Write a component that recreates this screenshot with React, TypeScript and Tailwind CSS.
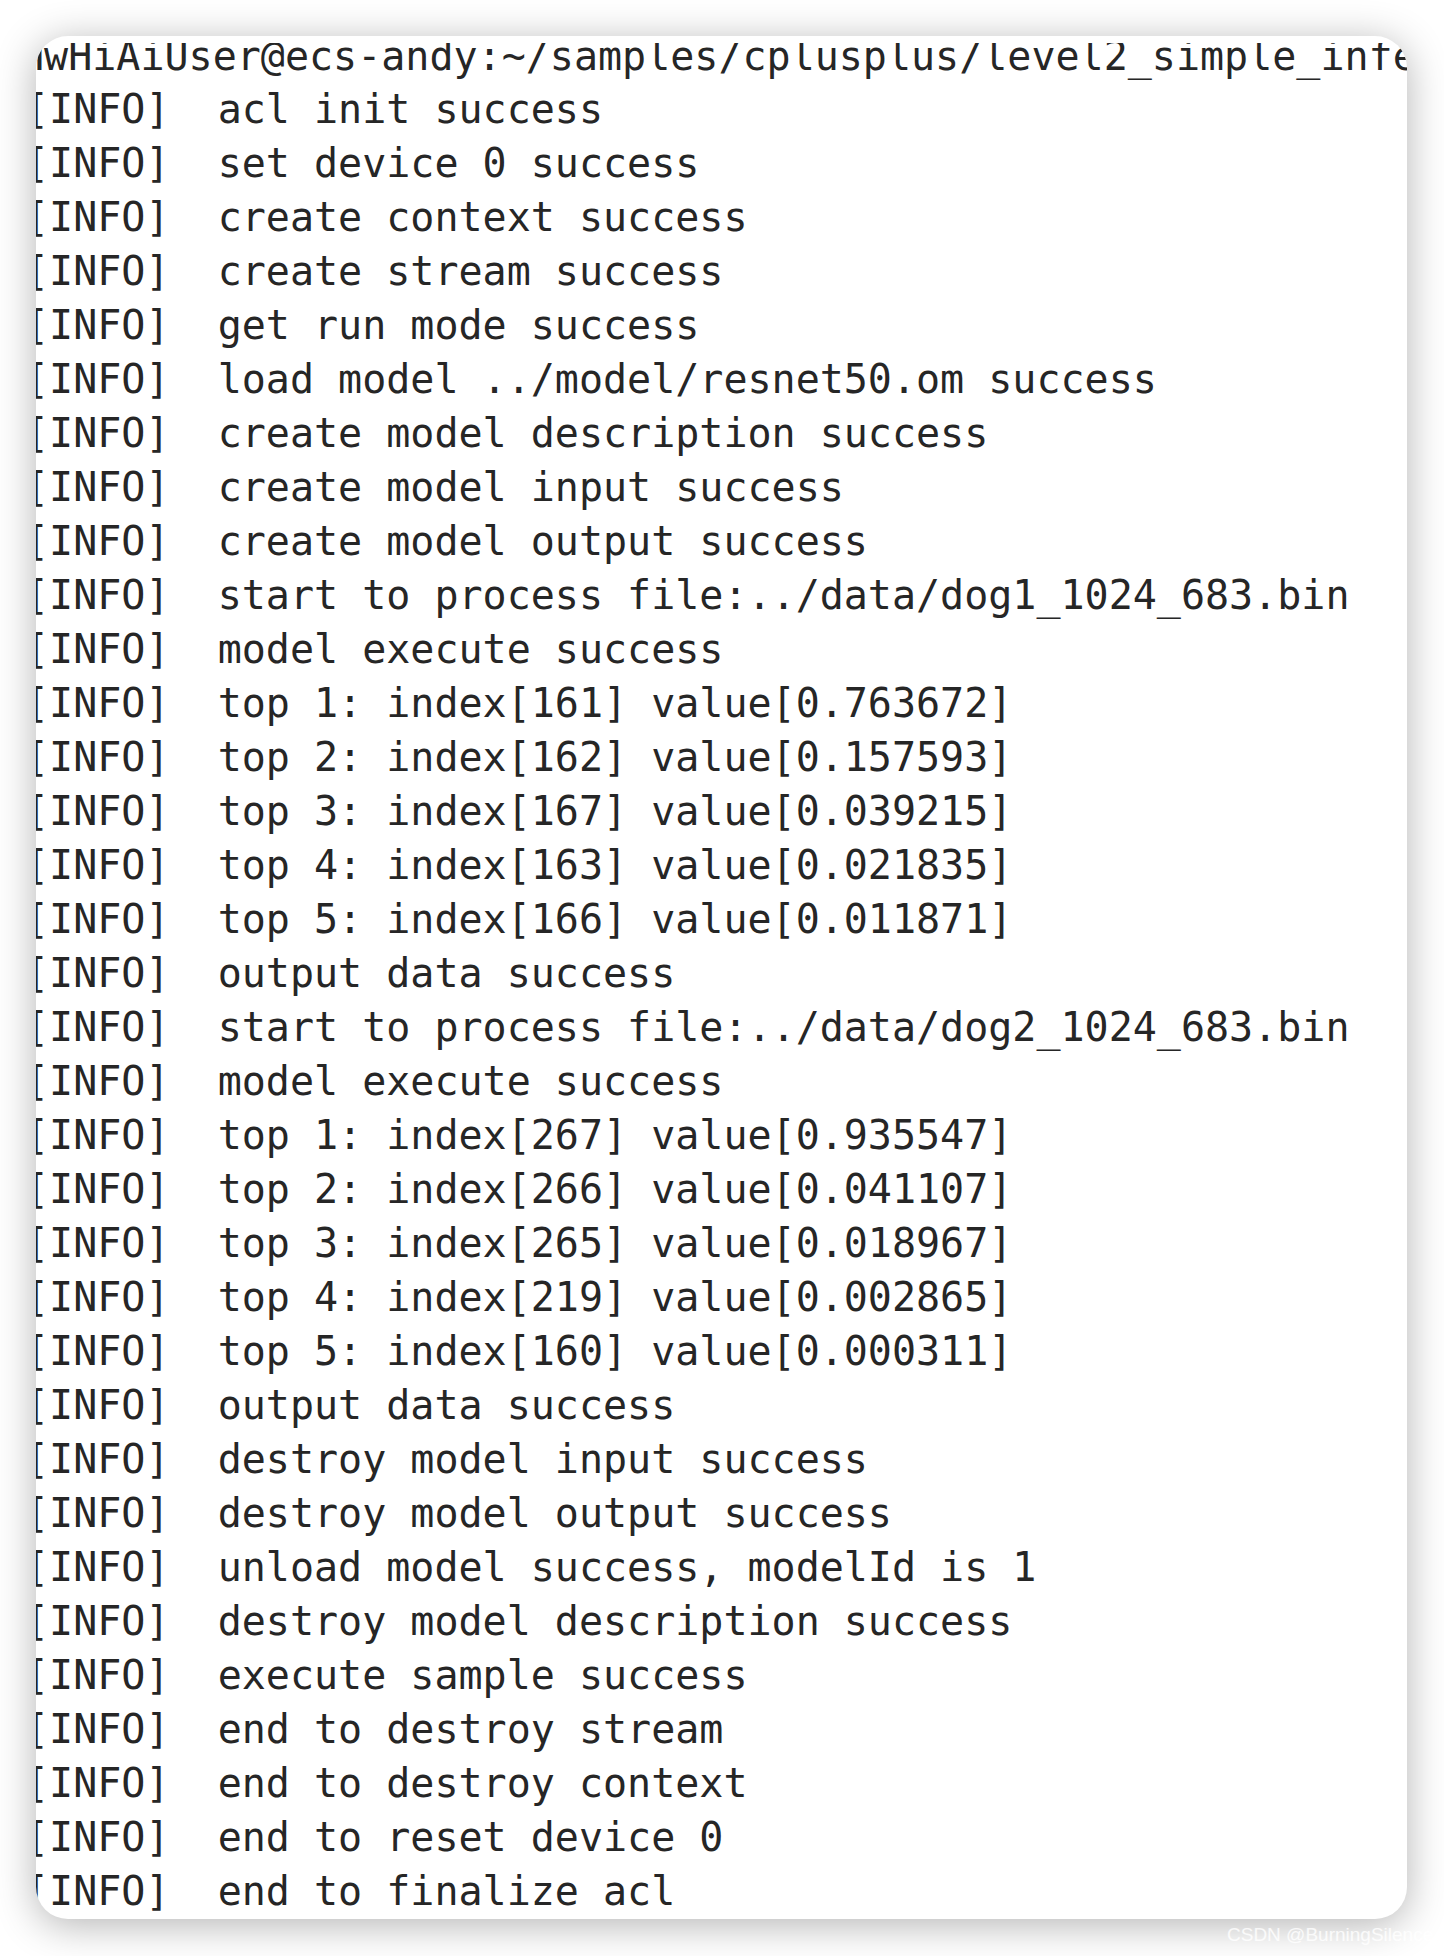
const header = "HwHiAiUser@ecs-andy:~/samples/cplusplus/level2_simple_inference/1_classification/resnet50_imagenet_classification/out$ ./main";

const logLines = [
  "acl init success",
  "set device 0 success",
  "create context success",
  "create stream success",
  "get run mode success",
  "load model ../model/resnet50.om success",
  "create model description success",
  "create model input success",
  "create model output success",
  "start to process file:../data/dog1_1024_683.bin",
  "model execute success",
  "top 1: index[161] value[0.763672]",
  "top 2: index[162] value[0.157593]",
  "top 3: index[167] value[0.039215]",
  "top 4: index[163] value[0.021835]",
  "top 5: index[166] value[0.011871]",
  "output data success",
  "start to process file:../data/dog2_1024_683.bin",
  "model execute success",
  "top 1: index[267] value[0.935547]",
  "top 2: index[266] value[0.041107]",
  "top 3: index[265] value[0.018967]",
  "top 4: index[219] value[0.002865]",
  "top 5: index[160] value[0.000311]",
  "output data success",
  "destroy model input success",
  "destroy model output success",
  "unload model success, modelId is 1",
  "destroy model description success",
  "execute sample success",
  "end to destroy stream",
  "end to destroy context",
  "end to reset device 0",
  "end to finalize acl",
];

export default function App() {
  return (
    <div className="relative min-h-screen w-[1444px] h-[1956px] bg-white overflow-hidden">
      {/* Terminal window card */}
      <div className="pt-[36px] pl-[36px]">
        <div className="w-[1371px] h-[1883px] rounded-[32px] bg-white overflow-hidden shadow-[0_6px_40px_rgba(0,0,0,0.3)]">
          <div className="pt-[7px] font-['DejaVu_Sans_Mono','Liberation_Mono',monospace] text-[40px] leading-[54px] text-[#262626] whitespace-pre">
            {/* prompt line, top of the tall glyphs cut off */}
            <div className="h-[39px] overflow-hidden">
              <div className="-mt-[14px] -ml-[16px]">{header}</div>
            </div>
            {logLines.map((line, i) => (
              <div key={i} className="-ml-[11px]">
                {"[INFO]  " + line}
              </div>
            ))}
          </div>
        </div>
      </div>

      {/* watermark */}
      <div className="absolute left-[1227px] top-[1924px] font-['Liberation_Sans',Arial,sans-serif] text-[19px] leading-[22px] text-white/80 whitespace-nowrap">
        CSDN @BurningSilence
      </div>
    </div>
  );
}
